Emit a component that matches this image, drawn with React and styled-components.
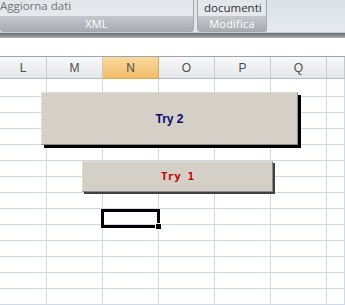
import styled, { createGlobalStyle } from 'styled-components';

const GlobalStyle = createGlobalStyle`
  html, body {
    margin: 0;
    padding: 0;
    background: #ffffff;
  }
  body {
    font-family: "Liberation Sans", Arial, sans-serif;
  }
`;

const Window = styled.div`
  position: relative;
  width: 345px;
  height: 305px;
  overflow: hidden;
  display: flex;
  flex-direction: column;
  background: #ffffff;
`;

const Ribbon = styled.div`
  height: 32px;
  display: flex;
  gap: 3px;
  background: linear-gradient(#dce1e6, #e6eaee);
  border-bottom: 1px solid #c9cdd2;
`;

const Group = styled.div`
  width: ${(p) => p.$width}px;
  display: flex;
  flex-direction: column;
  border: 1px solid #a4a9ae;
  border-top: none;
  border-left: ${(p) => (p.$edge ? '1px solid #a4a9ae' : 'none')};
  border-radius: 0 0 3px 3px;
  background: linear-gradient(#e2e6ea, #e9ecef);
  overflow: hidden;
`;

const GroupBody = styled.div`
  height: 16px;
  display: flex;
  align-items: flex-end;
  padding-left: ${(p) => p.$pad}px;
  font-family: "Open Sans", "DejaVu Sans", sans-serif;
  font-size: 11.5px;
  line-height: 13px;
  color: ${(p) => p.$color};
  white-space: nowrap;
  margin-top: ${(p) => p.$shift || 0}px;
  margin-bottom: ${(p) => -(p.$shift || 0)}px;
`;

const GroupLabel = styled.div`
  flex: 1;
  display: flex;
  align-items: center;
  justify-content: center;
  background: linear-gradient(#c4c7cb, #a9acb0);
  color: #ffffff;
  font-family: "Open Sans", "DejaVu Sans", sans-serif;
  font-size: 11px;
  letter-spacing: 0.2px;
`;

const RibbonEdge = styled.div`
  height: 5px;
  background: linear-gradient(#6c6f72, #8d9093 60%, #b3b6b9);
`;

const FormulaArea = styled.div`
  height: 20px;
  background: #ffffff;
  border-bottom: 1px solid #9ea4ab;
`;

const Sheet = styled.div`
  flex: 1;
  display: grid;
  grid-template-columns: 47px repeat(5, 56px) 1fr;
  grid-template-rows: 22px 18px repeat(13, 16px);
`;

const HeaderCell = styled.div`
  display: flex;
  align-items: center;
  justify-content: center;
  font-family: "Liberation Sans", Arial, sans-serif;
  font-size: 12px;
  color: #4e4e4e;
  border-right: 1px solid ${(p) => (p.$active ? '#d9a653' : '#c5c8cc')};
  border-bottom: 1px solid ${(p) => (p.$active ? '#d9a653' : '#b7bcc2')};
  background: ${(p) =>
    p.$active
      ? 'linear-gradient(#f9d99f, #f3bd69)'
      : 'linear-gradient(#f7f8f9, #e3e6e9)'};
`;

const Cell = styled.div`
  border-right: 1px solid #d0d7e5;
  border-bottom: 1px solid #d0d7e5;
`;

const Selection = styled.div`
  position: absolute;
  left: 101px;
  top: 209px;
  width: 53px;
  height: 13px;
  border: 3px solid #000;
`;

const FillHandle = styled.div`
  position: absolute;
  left: 155px;
  top: 223px;
  width: 5px;
  height: 5px;
  background: #000;
  border: 1px solid #fff;
`;

const FormButton = styled.div`
  position: absolute;
  left: ${(p) => p.$x}px;
  top: ${(p) => p.$y}px;
  width: ${(p) => p.$w}px;
  height: ${(p) => p.$h}px;
  display: flex;
  align-items: center;
  justify-content: center;
  background: #d4d0c8;
  box-sizing: border-box;
  border-top: 1px solid #dedbd5;
  border-left: 1px solid #dedbd5;
  border-right: 1px solid #8a8a8a;
  border-bottom: 1px solid #8a8a8a;
  box-shadow: ${(p) => (p.$heavy ? '3px 3px 0 #000' : '2px 2px 0 #404040')};
  color: ${(p) => p.$color};
  font-family: ${(p) => p.$font};
  font-size: ${(p) => p.$size}px;
  font-weight: bold;
`;

const columns = ['L', 'M', 'N', 'O', 'P', 'Q', ''];

export default function App() {
  const rows = Array.from({ length: 14 });
  return (
    <>
      <GlobalStyle />
      <Window>
        <Ribbon>
          <Group $width={193}>
            <GroupBody $pad={0} $color="#6f7275" $shift={-4}>
              Aggiorna dati
            </GroupBody>
            <GroupLabel>XML</GroupLabel>
          </Group>
          <Group $width={68} $edge>
            <GroupBody $pad={6} $color="#2f2f2f" $shift={-2}>
              documenti
            </GroupBody>
            <GroupLabel>Modifica</GroupLabel>
          </Group>
        </Ribbon>
        <RibbonEdge />
        <FormulaArea />
        <Sheet>
          {columns.map((c) => (
            <HeaderCell key={c || 'end'} $active={c === 'N'}>
              {c}
            </HeaderCell>
          ))}
          {rows.map((_, r) =>
            columns.map((c) => <Cell key={`${r}-${c}`} />)
          )}
        </Sheet>
        <FormButton
          $x={41}
          $y={92}
          $w={257}
          $h={53}
          $heavy
          $color="#0b0b6a"
          $font={'"Liberation Sans", Arial, sans-serif'}
          $size={12}
        >
          Try 2
        </FormButton>
        <FormButton
          $x={82}
          $y={161}
          $w={191}
          $h={31}
          $color="#c00000"
          $font={'"DejaVu Sans Mono", "Liberation Mono", monospace'}
          $size={11}
        >
          Try 1
        </FormButton>
        <Selection />
        <FillHandle />
      </Window>
    </>
  );
}
